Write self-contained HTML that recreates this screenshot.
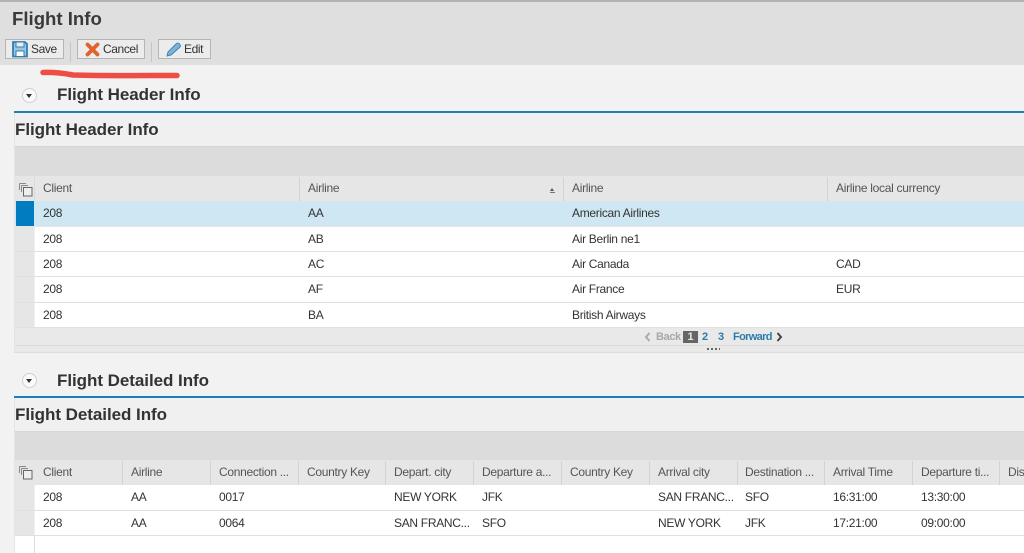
<!DOCTYPE html>
<html lang="en"><head><meta charset="utf-8"><title>Flight Info</title>
<style>
html,body{margin:0;padding:0;background:#f2f2f2}
body{width:1024px;height:553px;overflow:hidden;position:relative;background:#f2f2f2;font-family:"Liberation Sans",sans-serif;color:#333;filter:blur(.3px)}
.a{position:absolute}
.t{position:absolute;white-space:nowrap;font-size:12px;line-height:14px;letter-spacing:-.3px}
.h{color:#555}
.b{position:absolute;top:39px;height:20px;box-sizing:border-box;border:1px solid #b5b5b5;background:#ececec;font-size:12px;line-height:18px;color:#333;letter-spacing:-.4px}
.sec{position:absolute;font-weight:bold;font-size:17px;line-height:20px;color:#333;white-space:nowrap;letter-spacing:-.05px}
.sep{position:absolute;top:42px;width:1px;height:20px;background:#c4c4c4}
.cir{position:absolute;width:15px;height:15px;border-radius:50%;background:#fafafa;border:1.500px solid #cfcfcf;box-sizing:border-box}
.cir:after{content:"";position:absolute;left:3px;top:4.500px;border-left:3.500px solid transparent;border-right:3.500px solid transparent;border-top:4px solid #333}
</style></head><body>
<div class="a" style="left:0;top:0;width:1024px;height:2px;background:#b3b3b3"></div>
<div class="a" style="left:0;top:2px;width:1024px;height:63px;background:#dfdfdf"></div>
<div class="a" style="left:12px;top:8px;font-weight:bold;font-size:18.600px;line-height:22px;color:#3a3a3a">Flight Info</div>

<div class="b" style="left:5px;width:59px;padding-left:25px">Save</div>
<svg class="a" style="left:12px;top:41px" width="16" height="17" viewBox="0 0 16 17"><path d="M1 1H13L15 3V15.500H1Z" fill="#9cc3df" stroke="#2f7fb5" stroke-width="1.800"/><rect x="4" y="1" width="8" height="5" fill="#e9eef2" stroke="#2f7fb5"/><rect x="4" y="10" width="8" height="5.500" fill="#fff" stroke="#2f7fb5"/></svg>
<div class="sep" style="left:70px"></div>
<div class="b" style="left:77px;width:68px;padding-left:25px">Cancel</div>
<svg class="a" style="left:85px;top:42px" width="15" height="15" viewBox="0 0 15 15"><path d="M2.500 2.500L12.500 12.500M12.500 2.500L2.500 12.500" stroke="#e2632c" stroke-width="3.800" stroke-linecap="round"/></svg>
<div class="sep" style="left:151px"></div>
<div class="b" style="left:158px;width:53px;padding-left:25px">Edit</div>
<svg class="a" style="left:166px;top:42px" width="16" height="15" viewBox="0 0 16 15"><path d="M1 14L2 10L10.500 1.500Q12 .5 13.500 2Q15 3.500 14 5L5 13Z" fill="#7fb2d6" stroke="#3f86b8" stroke-width="1"/></svg>

<svg class="a" style="left:38px;top:68px" width="145" height="12" viewBox="0 0 145 12"><path d="M5 4.500C16 4 24 5 35 7C70 8 105 7.500 139 7.500" fill="none" stroke="#ee4d45" stroke-width="5.500" stroke-linecap="round"/></svg>

<div class="cir" style="left:22px;top:88px"></div>
<div class="sec" style="left:57px;top:85px">Flight Header Info</div>
<div class="a" style="left:14px;top:111px;width:1010px;height:2px;background:#1b80b8"></div>

<div class="a" style="left:14px;top:113px;width:1010px;height:240px;background:#f0f0f0;border-left:1px solid #e4e4e4"></div>
<div class="sec" style="left:15px;top:120px">Flight Header Info</div>
<div class="a" style="left:15px;top:146px;width:1009px;height:1px;background:#d6d6d6"></div>
<div class="a" style="left:15px;top:147px;width:1009px;height:29px;background:#dcdcdc"></div>
<div class="a" style="left:15px;top:176px;width:1009px;height:25px;background:#e6e6e6"></div>
<div class="a" style="left:299px;top:177px;width:1px;height:24px;background:#d3d3d3"></div>
<div class="a" style="left:563px;top:177px;width:1px;height:24px;background:#d3d3d3"></div>
<div class="a" style="left:827px;top:177px;width:1px;height:24px;background:#d3d3d3"></div>
<div class="a" style="left:34px;top:177px;width:1px;height:24px;background:#dadada"></div>
<svg class="a" style="left:19px;top:183px" width="14" height="14" viewBox="0 0 14 14"><path d="M.5 .5H7M.5 .5V7M2.500 2.500H9M2.500 2.500V9" fill="none" stroke="#888"/><rect x="4.500" y="4.500" width="8.500" height="8.500" fill="#eee" stroke="#666"/></svg>
<div class="t h" style="left:43px;top:181px">Client</div>
<div class="t h" style="left:308px;top:181px">Airline</div>
<div class="t h" style="left:572px;top:181px">Airline</div>
<div class="t h" style="left:836px;top:181px">Airline local currency</div>
<div class="a" style="left:550px;top:188px;border-left:2.500px solid transparent;border-right:2.500px solid transparent;border-bottom:3px solid #555"></div>
<div class="a" style="left:550px;top:192px;width:5px;height:1px;background:#777"></div>

<div class="a" style="left:15px;top:201px;width:1009px;height:25px;background:#cfe7f2"></div>
<div class="a" style="left:16px;top:201px;width:18px;height:25px;background:#007cc0"></div>
<div class="a" style="left:35px;top:227px;width:989px;height:100px;background:#fff"></div>
<div class="a" style="left:15px;top:227px;width:19px;height:100px;background:#e6e6e6"></div>
<div class="a" style="left:15px;top:251px;width:1009px;height:1px;background:#e0e0e0"></div>
<div class="a" style="left:15px;top:276px;width:1009px;height:1px;background:#e0e0e0"></div>
<div class="a" style="left:15px;top:302px;width:1009px;height:1px;background:#e0e0e0"></div>
<div class="a" style="left:15px;top:226px;width:1009px;height:1px;background:#e6e6e6"></div>

<div class="t" style="left:43px;top:206px">208</div><div class="t" style="left:308px;top:206px">AA</div><div class="t" style="left:572px;top:206px">American Airlines</div>
<div class="t" style="left:43px;top:232px">208</div><div class="t" style="left:308px;top:232px">AB</div><div class="t" style="left:572px;top:232px">Air Berlin ne1</div>
<div class="t" style="left:43px;top:257px">208</div><div class="t" style="left:308px;top:257px">AC</div><div class="t" style="left:572px;top:257px">Air Canada</div><div class="t" style="left:836px;top:257px">CAD</div>
<div class="t" style="left:43px;top:282px">208</div><div class="t" style="left:308px;top:282px">AF</div><div class="t" style="left:572px;top:282px">Air France</div><div class="t" style="left:836px;top:282px">EUR</div>
<div class="t" style="left:43px;top:308px">208</div><div class="t" style="left:308px;top:308px">BA</div><div class="t" style="left:572px;top:308px">British Airways</div>

<div class="a" style="left:15px;top:327px;width:1009px;height:18px;background:#e9e9e9;border-top:1px solid #e0e0e0"></div>
<div class="a" style="left:15px;top:345px;width:1009px;height:6px;background:#e9e9e9;border-top:1px solid #dcdcdc;border-bottom:1px solid #dcdcdc"></div>
<svg class="a" style="left:644px;top:332px" width="7" height="10" viewBox="0 0 7 10"><path d="M5.500 1L2 5L5.500 9" fill="none" stroke="#aaa" stroke-width="2"/></svg>
<div class="t" style="left:656px;top:330px;font-size:11px;font-weight:bold;color:#a8a8a8;letter-spacing:-.4px">Back</div>
<div class="a" style="left:683px;top:331px;width:15px;height:12px;background:#666;color:#e8e8e8;font-size:11px;font-weight:bold;line-height:12px;text-align:center">1</div>
<div class="t" style="left:702px;top:330px;font-size:11px;color:#2b7cab;font-weight:bold">2</div>
<div class="t" style="left:718px;top:330px;font-size:11px;color:#2b7cab;font-weight:bold">3</div>
<div class="t" style="left:733px;top:330px;font-size:11px;font-weight:bold;color:#2b7cab;letter-spacing:-.65px">Forward</div>
<svg class="a" style="left:776px;top:332px" width="7" height="10" viewBox="0 0 7 10"><path d="M1.500 1L5 5L1.500 9" fill="none" stroke="#444" stroke-width="2"/></svg>
<div class="a" style="left:707px;top:348px;width:13px;height:2px;background:repeating-linear-gradient(90deg,#666 0 2px,transparent 2px 4px)"></div>

<div class="cir" style="left:22px;top:373px"></div>
<div class="sec" style="left:57px;top:371px">Flight Detailed Info</div>
<div class="a" style="left:14px;top:396px;width:1010px;height:2px;background:#1b80b8"></div>

<div class="a" style="left:14px;top:398px;width:1010px;height:155px;background:#f0f0f0;border-left:1px solid #e4e4e4"></div>
<div class="sec" style="left:15px;top:405px">Flight Detailed Info</div>
<div class="a" style="left:15px;top:431px;width:1009px;height:29px;background:#dcdcdc;border-top:1px solid #d6d6d6;box-sizing:border-box"></div>
<div class="a" style="left:15px;top:460px;width:1009px;height:25px;background:#e6e6e6"></div>
<svg class="a" style="left:19px;top:466px" width="14" height="14" viewBox="0 0 14 14"><path d="M.5 .5H7M.5 .5V7M2.500 2.500H9M2.500 2.500V9" fill="none" stroke="#888"/><rect x="4.500" y="4.500" width="8.500" height="8.500" fill="#eee" stroke="#666"/></svg>
<div class="a" style="left:122px;top:461px;width:1px;height:24px;background:#d3d3d3"></div>
<div class="a" style="left:210px;top:461px;width:1px;height:24px;background:#d3d3d3"></div>
<div class="a" style="left:298px;top:461px;width:1px;height:24px;background:#d3d3d3"></div>
<div class="a" style="left:385px;top:461px;width:1px;height:24px;background:#d3d3d3"></div>
<div class="a" style="left:473px;top:461px;width:1px;height:24px;background:#d3d3d3"></div>
<div class="a" style="left:561px;top:461px;width:1px;height:24px;background:#d3d3d3"></div>
<div class="a" style="left:649px;top:461px;width:1px;height:24px;background:#d3d3d3"></div>
<div class="a" style="left:737px;top:461px;width:1px;height:24px;background:#d3d3d3"></div>
<div class="a" style="left:824px;top:461px;width:1px;height:24px;background:#d3d3d3"></div>
<div class="a" style="left:912px;top:461px;width:1px;height:24px;background:#d3d3d3"></div>
<div class="a" style="left:999px;top:461px;width:1px;height:24px;background:#d3d3d3"></div>

<div class="t h" style="left:43px;top:465px">Client</div>
<div class="t h" style="left:131px;top:465px">Airline</div>
<div class="t h" style="left:219px;top:465px">Connection ...</div>
<div class="t h" style="left:307px;top:465px">Country Key</div>
<div class="t h" style="left:394px;top:465px">Depart. city</div>
<div class="t h" style="left:482px;top:465px">Departure a...</div>
<div class="t h" style="left:570px;top:465px">Country Key</div>
<div class="t h" style="left:658px;top:465px">Arrival city</div>
<div class="t h" style="left:745px;top:465px">Destination ...</div>
<div class="t h" style="left:833px;top:465px">Arrival Time</div>
<div class="t h" style="left:921px;top:465px">Departure ti...</div>
<div class="t h" style="left:1008px;top:465px">Dis</div>

<div class="a" style="left:35px;top:485px;width:989px;height:68px;background:#fff"></div>
<div class="a" style="left:15px;top:485px;width:19px;height:50px;background:#e6e6e6"></div>
<div class="a" style="left:15px;top:535px;width:19px;height:18px;background:#fff"></div>
<div class="a" style="left:34px;top:535px;width:1px;height:18px;background:#dcdcdc"></div>
<div class="a" style="left:15px;top:510px;width:1009px;height:1px;background:#e0e0e0"></div>
<div class="a" style="left:15px;top:535px;width:1009px;height:1px;background:#e0e0e0"></div>

<div class="t" style="left:43px;top:490px">208</div><div class="t" style="left:131px;top:490px">AA</div><div class="t" style="left:219px;top:490px">0017</div><div class="t" style="left:394px;top:490px">NEW YORK</div><div class="t" style="left:482px;top:490px">JFK</div><div class="t" style="left:658px;top:490px">SAN FRANC...</div><div class="t" style="left:745px;top:490px">SFO</div><div class="t" style="left:833px;top:490px">16:31:00</div><div class="t" style="left:921px;top:490px">13:30:00</div>
<div class="t" style="left:43px;top:516px">208</div><div class="t" style="left:131px;top:516px">AA</div><div class="t" style="left:219px;top:516px">0064</div><div class="t" style="left:394px;top:516px">SAN FRANC...</div><div class="t" style="left:482px;top:516px">SFO</div><div class="t" style="left:658px;top:516px">NEW YORK</div><div class="t" style="left:745px;top:516px">JFK</div><div class="t" style="left:833px;top:516px">17:21:00</div><div class="t" style="left:921px;top:516px">09:00:00</div>
</body></html>
